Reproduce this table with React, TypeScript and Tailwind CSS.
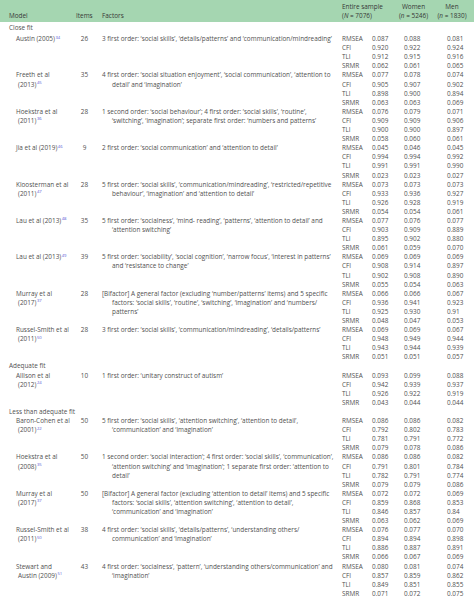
import React from "react";

type Stat = [string, string, string, string];

type Row = {
  model: string[];
  ref: string;
  items: number;
  factors: string[];
  stats: Stat[];
};

type Section = { title: string; rows: Row[] };

const stat = (
  rmsea: [string, string, string],
  cfi: [string, string, string],
  tli: [string, string, string],
  srmr: [string, string, string]
): Stat[] => [
  ["RMSEA", ...rmsea],
  ["CFI", ...cfi],
  ["TLI", ...tli],
  ["SRMR", ...srmr],
];

const SECTIONS: Section[] = [
  {
    title: "Close fit",
    rows: [
      {
        model: ["Austin (2005)"],
        ref: "34",
        items: 26,
        factors: [
          "3 first order: ‘social skills’, ‘details/patterns’ and ‘communication/mindreading’",
        ],
        stats: stat(
          ["0.087", "0.088", "0.081"],
          ["0.920", "0.922", "0.924"],
          ["0.912", "0.915", "0.916"],
          ["0.062", "0.061", "0.065"]
        ),
      },
      {
        model: ["Freeth et al", "(2013)"],
        ref: "45",
        items: 35,
        factors: [
          "4 first order: ‘social situation enjoyment’, ‘social communication’, ‘attention to",
          "detail’ and ‘imagination’",
        ],
        stats: stat(
          ["0.077", "0.078", "0.074"],
          ["0.905", "0.907", "0.902"],
          ["0.898", "0.900", "0.894"],
          ["0.063", "0.063", "0.069"]
        ),
      },
      {
        model: ["Hoekstra et al", "(2011)"],
        ref: "36",
        items: 28,
        factors: [
          "1 second order: ‘social behaviour’; 4 first order: ‘social skills’, ‘routine’,",
          "‘switching’, ‘imagination’; separate first order: ‘numbers and patterns’",
        ],
        stats: stat(
          ["0.076", "0.079", "0.071"],
          ["0.909", "0.909", "0.906"],
          ["0.900", "0.900", "0.897"],
          ["0.058", "0.060", "0.061"]
        ),
      },
      {
        model: ["Jia et al (2019)"],
        ref: "46",
        items: 9,
        factors: [
          "2 first order: ‘social communication’ and ‘attention to detail’",
        ],
        stats: stat(
          ["0.045", "0.046", "0.045"],
          ["0.994", "0.994", "0.992"],
          ["0.991", "0.991", "0.990"],
          ["0.023", "0.023", "0.027"]
        ),
      },
      {
        model: ["Kloosterman et al", "(2011)"],
        ref: "47",
        items: 28,
        factors: [
          "5 first order: ‘social skills’, ‘communication/mindreading’, ‘restricted/repetitive",
          "behaviour’, ‘imagination’ and ‘attention to detail’",
        ],
        stats: stat(
          ["0.073", "0.073", "0.073"],
          ["0.933", "0.936", "0.927"],
          ["0.926", "0.928", "0.919"],
          ["0.054", "0.054", "0.061"]
        ),
      },
      {
        model: ["Lau et al (2013)"],
        ref: "48",
        items: 35,
        factors: [
          "5 first order: ‘socialness’, ‘mind- reading’, ‘patterns’, ‘attention to detail’ and",
          "‘attention switching’",
        ],
        stats: stat(
          ["0.077", "0.076", "0.077"],
          ["0.903", "0.909", "0.889"],
          ["0.895", "0.902", "0.880"],
          ["0.061", "0.059", "0.070"]
        ),
      },
      {
        model: ["Lau et al (2013)"],
        ref: "49",
        items: 39,
        factors: [
          "5 first order: ‘sociability’, ‘social cognition’, ‘narrow focus’, ‘interest in patterns’",
          "and ‘resistance to change’",
        ],
        stats: stat(
          ["0.069", "0.069", "0.069"],
          ["0.908", "0.914", "0.897"],
          ["0.902", "0.908", "0.890"],
          ["0.055", "0.054", "0.063"]
        ),
      },
      {
        model: ["Murray et al", "(2017)"],
        ref: "37",
        items: 28,
        factors: [
          "[Bifactor] A general factor (excluding ‘number/patterns’ items) and 5 specific",
          "factors: ‘social skills’, ‘routine’, ‘switching’, ‘imagination’ and ‘numbers/",
          "patterns’",
        ],
        stats: stat(
          ["0.066", "0.066", "0.067"],
          ["0.936", "0.941", "0.923"],
          ["0.925", "0.930", "0.91"],
          ["0.048", "0.047", "0.053"]
        ),
      },
      {
        model: ["Russel-Smith et al", "(2011)"],
        ref: "50",
        items: 28,
        factors: [
          "3 first order: ‘social skills’, ‘communication/mindreading’, ‘details/patterns’",
        ],
        stats: stat(
          ["0.069", "0.069", "0.067"],
          ["0.948", "0.949", "0.944"],
          ["0.943", "0.944", "0.939"],
          ["0.051", "0.051", "0.057"]
        ),
      },
    ],
  },
  {
    title: "Adequate fit",
    rows: [
      {
        model: ["Allison et al", "(2012)"],
        ref: "24",
        items: 10,
        factors: ["1 first order: ‘unitary construct of autism’"],
        stats: stat(
          ["0.093", "0.099", "0.088"],
          ["0.942", "0.939", "0.937"],
          ["0.926", "0.922", "0.919"],
          ["0.043", "0.044", "0.044"]
        ),
      },
    ],
  },
  {
    title: "Less than adequate fit",
    rows: [
      {
        model: ["Baron-Cohen et al", "(2001)"],
        ref: "22",
        items: 50,
        factors: [
          "5 first order: ‘social skills’, ‘attention switching’, ‘attention to detail’,",
          "‘communication’ and ‘imagination’",
        ],
        stats: stat(
          ["0.086", "0.086", "0.082"],
          ["0.792", "0.802", "0.783"],
          ["0.781", "0.791", "0.772"],
          ["0.079", "0.078", "0.086"]
        ),
      },
      {
        model: ["Hoekstra et al", "(2008)"],
        ref: "35",
        items: 50,
        factors: [
          "1 second order: ‘social interaction’; 4 first order: ‘social skills’, ‘communication’,",
          "‘attention switching’ and ‘imagination’; 1 separate first order: ‘attention to",
          "detail’",
        ],
        stats: stat(
          ["0.086", "0.086", "0.082"],
          ["0.791", "0.801", "0.784"],
          ["0.782", "0.791", "0.774"],
          ["0.079", "0.079", "0.086"]
        ),
      },
      {
        model: ["Murray et al", "(2017)"],
        ref: "37",
        items: 50,
        factors: [
          "[Bifactor] A general factor (excluding ‘attention to detail’ items) and 5 specific",
          "factors: ‘social skills’, ‘attention switching’, ‘attention to detail’,",
          "‘communication’ and ‘imagination’",
        ],
        stats: stat(
          ["0.072", "0.072", "0.069"],
          ["0.859", "0.868", "0.853"],
          ["0.846", "0.857", "0.84"],
          ["0.063", "0.062", "0.069"]
        ),
      },
      {
        model: ["Russel-Smith et al", "(2011)"],
        ref: "50",
        items: 38,
        factors: [
          "4 first order: ‘social skills’, ‘details/patterns’, ‘understanding others/",
          "communication’ and ‘imagination’",
        ],
        stats: stat(
          ["0.076", "0.077", "0.070"],
          ["0.894", "0.894", "0.898"],
          ["0.886", "0.887", "0.891"],
          ["0.066", "0.067", "0.069"]
        ),
      },
      {
        model: ["Stewart and", "Austin (2009)"],
        ref: "51",
        items: 43,
        factors: [
          "4 first order: ‘socialness’, ‘pattern’, ‘understanding others/communication’ and",
          "‘imagination’",
        ],
        stats: stat(
          ["0.080", "0.081", "0.074"],
          ["0.857", "0.859", "0.862"],
          ["0.849", "0.851", "0.855"],
          ["0.071", "0.072", "0.075"]
        ),
      },
    ],
  },
];

const Ref = ({ n }: { n: string }) => (
  <span className="relative -top-[2.5px] ml-[0.5px] text-[4.2px] leading-none text-[#5a5ad6]">
    {n}
  </span>
);

const ModelRow = ({ row }: { row: Row }) => (
  <div className="flex">
    <div className="w-[67px] pl-[7px] whitespace-nowrap">
      {row.model.map((line, i) => (
        <div key={i} className={i > 0 ? "pl-[2px]" : ""}>
          {line}
          {i === row.model.length - 1 && <Ref n={row.ref} />}
        </div>
      ))}
    </div>
    <div className="w-[17px] text-center">{row.items}</div>
    <div className="w-[240px] ml-[9px] whitespace-nowrap">
      {row.factors.map((line, i) => (
        <div key={i} className={i > 0 ? "pl-[10px]" : ""}>
          {line}
        </div>
      ))}
    </div>
    <div className="flex-1">
      {row.stats.map((s) => (
        <div key={s[0]} className="flex">
          <span className="w-[30px]">{s[0]}</span>
          <span className="w-[32px]">{s[1]}</span>
          <span className="w-[43px]">{s[2]}</span>
          <span>{s[3]}</span>
        </div>
      ))}
    </div>
  </div>
);

export default function App() {
  return (
    <div
      className="w-[474px] h-[603px] bg-white overflow-hidden text-[6.4px] leading-[9.1px] text-[#505050]"
      style={{ fontFamily: '"Open Sans", "Noto Sans", sans-serif' }}
    >
      <div className="h-[22px] bg-[#a5d6b1] flex items-end pl-[9px] pb-[2px] text-[#363636] leading-[9px]">
        <div className="w-[67px]">Model</div>
        <div className="w-[26px]">Items</div>
        <div className="w-[240px]">Factors</div>
        <div className="w-[54px]">
          <div>Entire sample</div>
          <div>
            (<i>N</i> = 7076)
          </div>
        </div>
        <div className="w-[35px] text-center">
          <div>Women</div>
          <div>
            (<i>n</i> = 5246)
          </div>
        </div>
        <div className="w-[42px] text-center">
          <div>Men</div>
          <div>
            (<i>n</i> = 1830)
          </div>
        </div>
      </div>

      <div className="pl-[9px] pt-[1px]">
        {SECTIONS.map((sec, si) => (
          <div key={sec.title}>
            <div className={si === 0 ? "mb-[2px]" : ""}>{sec.title}</div>
            {sec.rows.map((r, ri) => (
              <ModelRow key={ri} row={r} />
            ))}
          </div>
        ))}
      </div>
    </div>
  );
}
